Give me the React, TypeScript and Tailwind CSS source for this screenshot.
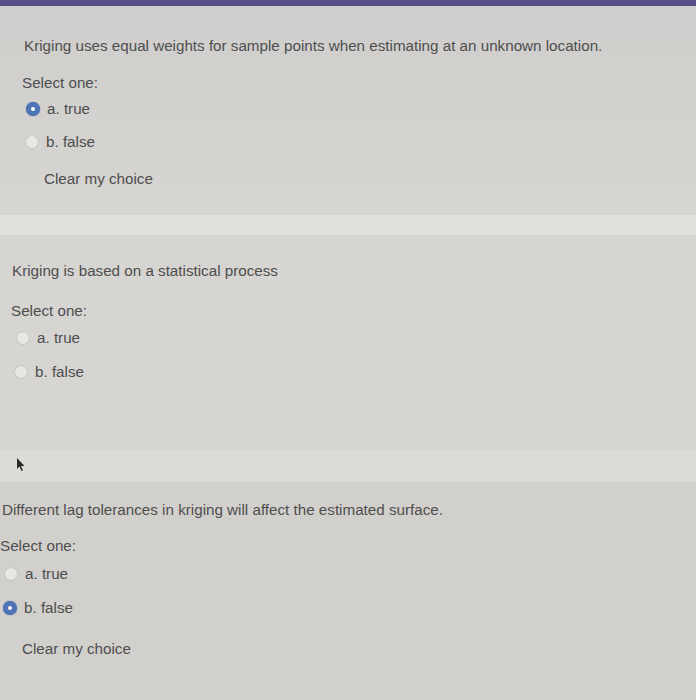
import React from "react";

type Opt = { label: string; checked?: boolean };

function Radio({ checked }: { checked?: boolean }) {
  if (checked) {
    return (
      <span className="inline-flex h-[14px] w-[14px] shrink-0 items-center justify-center rounded-full bg-[#4f74b6] shadow-[0_0_1px_#3b5d9a]">
        <span className="h-[4px] w-[4px] rounded-full bg-white" />
      </span>
    );
  }
  return (
    <span className="inline-block h-[14px] w-[14px] shrink-0 rounded-full bg-[#e8e7e3] shadow-[inset_0_0_0_1px_#c4c3bf]" />
  );
}

function Question({
  text,
  options,
  indent,
  clear,
  gaps,
}: {
  text: string;
  options: Opt[];
  indent: number[];
  clear?: boolean;
  gaps: string[];
}) {
  return (
    <div className="flex flex-col">
      <p className={`${gaps[0]} leading-5`} style={{ paddingLeft: indent[0] }}>
        {text}
      </p>
      <p className={`${gaps[1]} leading-5`} style={{ paddingLeft: indent[1] }}>
        Select one:
      </p>
      {options.map((o, i) => (
        <div
          key={o.label}
          className={`${i === 0 ? gaps[2] : gaps[3]} flex items-center gap-[7px] leading-5`}
          style={{ paddingLeft: indent[2 + i] }}
        >
          <Radio checked={o.checked} />
          <span>{o.label}</span>
        </div>
      ))}
      {clear && (
        <p className={`${gaps[4]} leading-5`} style={{ paddingLeft: indent[4] }}>
          Clear my choice
        </p>
      )}
    </div>
  );
}

export default function App() {
  return (
    <div
      className="h-[700px] w-[696px] overflow-hidden bg-[#d1cfcd] text-[15.2px] text-[#4e4e4e]"
      style={{ fontFamily: '"Liberation Sans", Arial, sans-serif' }}
    >
      <div className="h-[6px] bg-[#5a4e88]" />

      {/* question 1 */}
      <div className="h-[209px] bg-gradient-to-b from-[#cfcecc] to-[#d6d5d2]">
        <Question
          text="Kriging uses equal weights for sample points when estimating at an unknown location."
          options={[{ label: "a. true", checked: true }, { label: "b. false" }]}
          indent={[24, 22, 26, 25, 44]}
          clear
          gaps={["mt-[30px]", "mt-[17px]", "mt-[6px]", "mt-[13px]", "mt-[17px]"]}
        />
      </div>

      <div className="h-[20px] bg-[#dfe0d9]" />

      {/* question 2 */}
      <div className="h-[215px] bg-[#d6d5d2]">
        <Question
          text="Kriging is based on a statistical process"
          options={[{ label: "a. true" }, { label: "b. false" }]}
          indent={[12, 11, 16, 14, 0]}
          gaps={["mt-[26px]", "mt-[20px]", "mt-[7px]", "mt-[14px]", ""]}
        />
      </div>

      <div className="relative h-[32px] bg-[#dcddd6]">
        {/* mouse pointer */}
        <svg
          className="absolute left-[16px] top-[8px]"
          width="9"
          height="14"
          viewBox="0 0 9 14"
        >
          <path d="M1 0 L1 11 L3.5 8.5 L5.5 13 L7 12.3 L5 8 L8.5 8 Z" fill="#2a2a2a" />
        </svg>
      </div>

      {/* question 3 */}
      <div className="h-[218px] bg-[#d2d0cd]">
        <Question
          text="Different lag tolerances in kriging will affect the estimated surface."
          options={[{ label: "a. true" }, { label: "b. false", checked: true }]}
          indent={[2, 0, 4, 3, 22]}
          clear
          gaps={["mt-[18px]", "mt-[16px]", "mt-[8px]", "mt-[14px]", "mt-[21px]"]}
        />
      </div>
    </div>
  );
}
